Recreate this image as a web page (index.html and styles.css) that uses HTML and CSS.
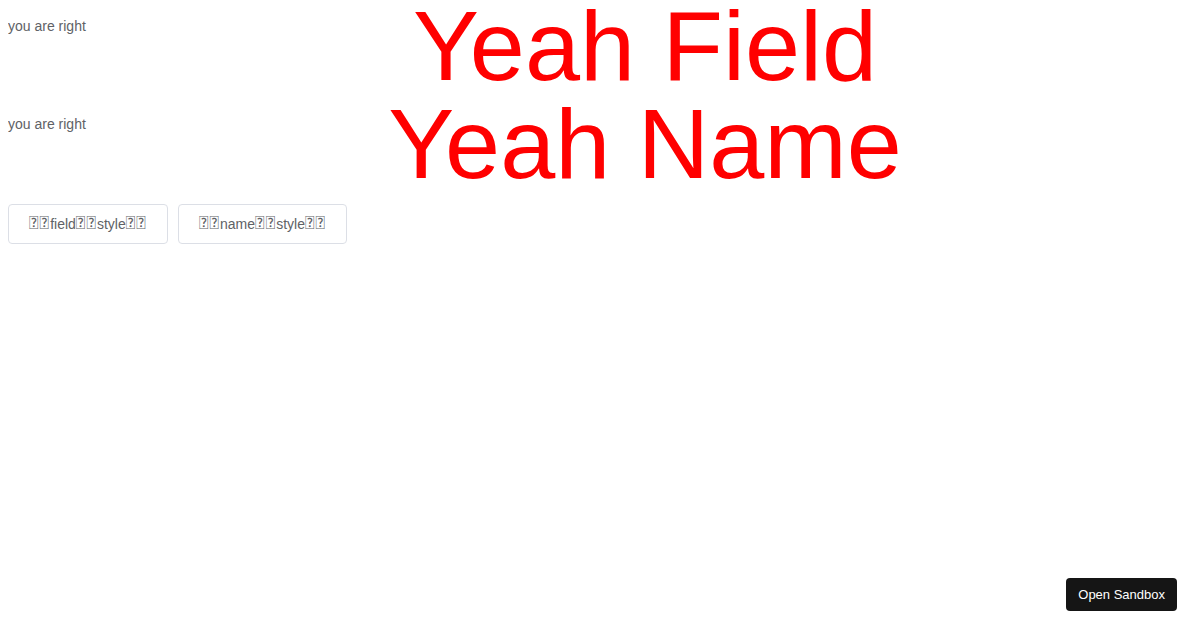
FILE: index.html
```html
<!DOCTYPE html>
<html lang="en">
<head>
<meta charset="utf-8">
<title>Demo</title>
<link rel="stylesheet" href="styles.css">
</head>
<body>
<div class="app">
  <div class="row">
    <div class="note">you are right</div>
    <div class="big">Yeah Field</div>
  </div>
  <div class="row">
    <div class="note">you are right</div>
    <div class="big">Yeah Name</div>
  </div>
  <div class="actions">
    <button class="btn" type="button"><span class="tofu">&#xE000;&#xE001;</span>field<span class="tofu">&#xE002;&#xE003;</span>style<span class="tofu">&#xE004;&#xE005;</span></button>
    <button class="btn" type="button"><span class="tofu">&#xE000;&#xE001;</span>name<span class="tofu">&#xE002;&#xE003;</span>style<span class="tofu">&#xE004;&#xE005;</span></button>
  </div>
</div>
<a class="sandbox" href="#">Open Sandbox</a>
</body>
</html>
```

FILE: styles.css
```css
html, body {
  background: #ffffff;
}
body {
  margin: 8px;
  font-family: "Liberation Sans", Arial, sans-serif;
  color: #606266;
  font-size: 14px;
}
.row {
  display: flex;
  align-items: flex-start;
  height: 98px;
}
.note {
  width: 90px;
  flex: none;
  margin-top: 8px;
  line-height: 20px;
  font-size: 14px;
  color: #606266;
  white-space: nowrap;
}
.big {
  flex: 1;
  text-align: center;
  font-size: 99px;
  line-height: 75px;
  color: #ff0000;
  white-space: nowrap;
}
.actions {
  display: flex;
  gap: 10px;
}
.btn {
  font-family: "Liberation Sans", Arial, sans-serif;
  font-size: 14px;
  line-height: 1;
  color: #606266;
  background: #ffffff;
  border: 1px solid #dcdfe6;
  border-radius: 4px;
  padding: 12px 20px;
  margin: 0;
  cursor: pointer;
  white-space: nowrap;
}
.tofu {
  font-family: Lato, sans-serif;
  font-size: 18px;
  line-height: 0;
  letter-spacing: 1px;
}
.sandbox {
  position: fixed;
  right: 23px;
  bottom: 19px;
  display: block;
  padding: 0 12px;
  height: 33px;
  line-height: 33px;
  background: #151515;
  color: #ffffff;
  border-radius: 4px;
  font-family: "Liberation Sans", Arial, sans-serif;
  font-size: 13px;
  text-decoration: none;
  box-sizing: border-box;
}
```
